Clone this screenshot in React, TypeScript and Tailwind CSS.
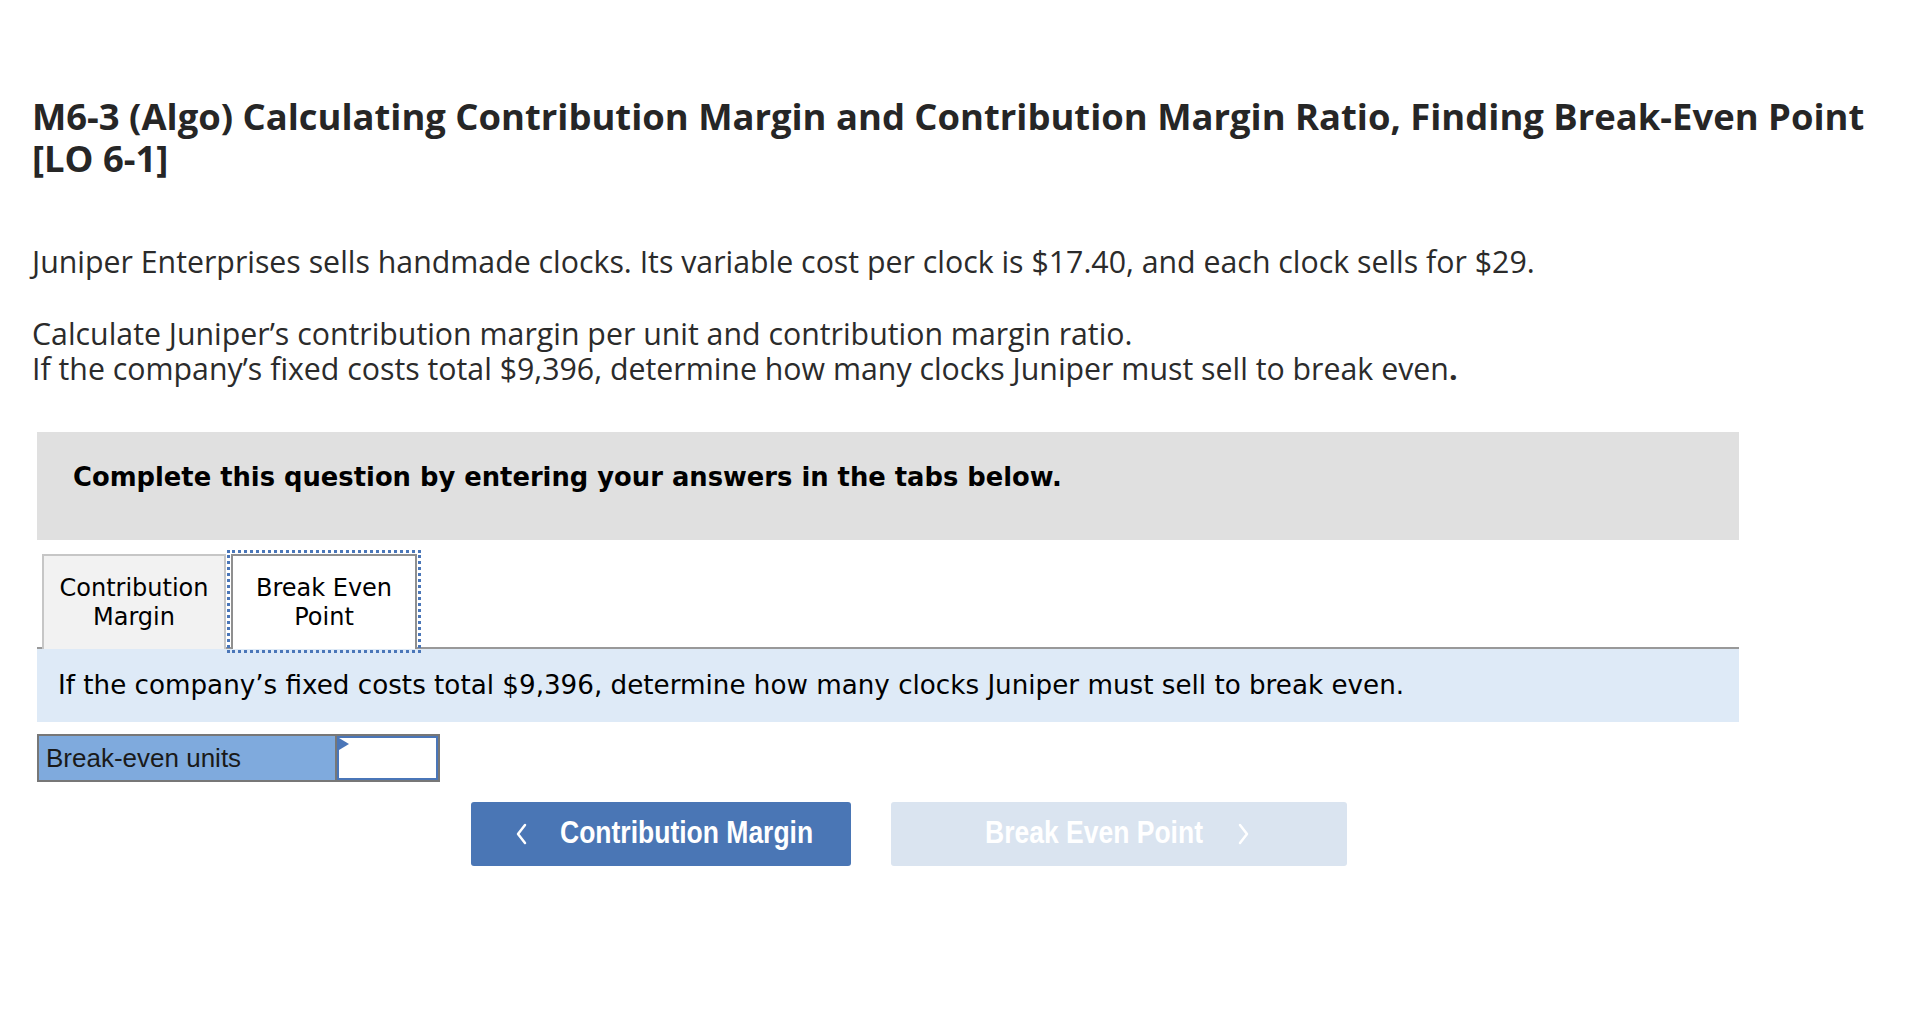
import React from 'react';

const ChevronLeft = () => (
    <svg width="12" height="22" viewBox="0 0 12 22" fill="none" className="shrink-0">
        <path d="M10 2 L3 11 L10 20" stroke="white" strokeWidth="2.5" strokeLinecap="round" strokeLinejoin="round" />
    </svg>
);

const ChevronRight = () => (
    <svg width="12" height="22" viewBox="0 0 12 22" fill="none" className="shrink-0">
        <path d="M2 2 L9 11 L2 20" stroke="white" strokeWidth="2.5" strokeLinecap="round" strokeLinejoin="round" />
    </svg>
);

const App: React.FC = () => {
    return (
        <div className="min-h-[1012px] bg-white px-[32px] text-[#2b2b2b]" style={{ fontFamily: '"Open Sans", Lato, sans-serif' }}>
            <h1 className="pt-[95px] text-[36.4px] leading-[42px] font-bold text-[#262626] whitespace-nowrap">
                M6-3 (Algo) Calculating Contribution Margin and Contribution Margin Ratio, Finding Break-Even Point
                <br />
                [LO 6-1]
            </h1>

            <p className="mt-[65px] text-[30.3px] leading-[35px]">
                Juniper Enterprises sells handmade clocks. Its variable cost per clock is $17.40, and each clock sells for $29.
            </p>
            <p className="mt-[37px] text-[30.3px] leading-[35px]">
                Calculate Juniper’s contribution margin per unit and contribution margin ratio.
                <br />
                If the company’s fixed costs total $9,396, determine how many clocks Juniper must sell to break even<b>.</b>
            </p>

            <div className="mt-[46px] ml-[5px] w-[1702px]" style={{ fontFamily: '"DejaVu Sans", Verdana, sans-serif' }}>
                <div className="bg-[#e0e0e0] h-[108px] pl-[36px] pt-[30px]">
                    <div className="text-[25.8px] leading-[30px] font-bold text-black">
                        Complete this question by entering your answers in the tabs below.
                    </div>
                </div>

                <div className="mt-[14px] flex items-end gap-[5px] pl-[5px] border-b-2 border-[#999999]">
                    <div className="w-[184px] h-[95px] -mb-[2px] bg-[#f2f2f2] border-2 border-b-0 border-[#c6c6c6] flex items-center justify-center text-center text-[24px] leading-[29px] text-black">
                        Contribution
                        <br />
                        Margin
                    </div>
                    <div className="w-[186px] h-[95px] -mb-[2px] bg-white border-2 border-b-0 border-[#8f8f8f] outline-[3px] outline-dotted outline-[#4a76b8] outline-offset-[1px] flex items-center justify-center text-center text-[24px] leading-[29px] text-black">
                        Break Even
                        <br />
                        Point
                    </div>
                </div>

                <div className="bg-[#deeaf7] h-[73px] pl-[21px] flex items-center text-[26.2px] text-black">
                    If the company’s fixed costs total $9,396, determine how many clocks Juniper must sell to break even.
                </div>

                <div className="mt-[12px] flex w-[403px] h-[48px] border-2 border-[#777777]" style={{ fontFamily: '"Liberation Sans", Arial, sans-serif' }}>
                    <div className="w-[298px] bg-[#7faadd] border-r-2 border-[#777777] pl-[7px] flex items-center text-[26px] text-[#1a1a1a]">
                        Break-even units
                    </div>
                    <div className="relative flex-1 bg-white border-2 border-[#4a76b8]">
                        <div className="absolute left-0 top-0 w-0 h-0 border-t-[6px] border-b-[6px] border-l-[10px] border-t-transparent border-b-transparent border-l-[#4a76b8]" />
                    </div>
                </div>

                <div className="mt-[20px] flex gap-[40px] pl-[434px]" style={{ fontFamily: '"Liberation Sans", Arial, sans-serif' }}>
                    <button className="w-[380px] h-[64px] rounded-[3px] bg-[#4a76b5] flex items-center pl-[44px] gap-[33px] text-white text-[26.5px] font-bold">
                        <ChevronLeft />
                        <span className="inline-block scale-y-[1.15]">Contribution Margin</span>
                    </button>
                    <button className="w-[456px] h-[64px] rounded-[3px] bg-[#dae4f0] flex items-center pl-[94px] gap-[35px] text-white text-[26.5px] font-bold">
                        <span className="inline-block scale-y-[1.15]">Break Even Point</span>
                        <ChevronRight />
                    </button>
                </div>
            </div>
        </div>
    );
};

export default App;
